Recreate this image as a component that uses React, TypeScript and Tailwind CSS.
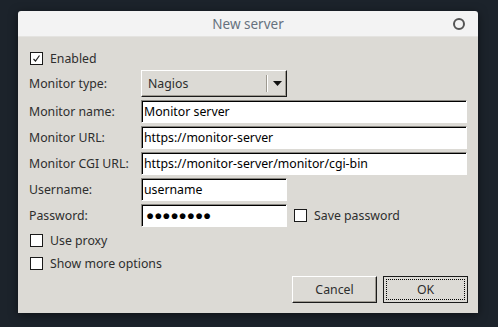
import React from "react";

function Check({ checked = false }: { checked?: boolean }) {
    return (
        <div className="w-[13px] h-[13px] border border-[#1a1a1a] bg-white flex items-center justify-center shrink-0">
            {checked && (
                <svg width="9" height="9" viewBox="0 0 9 9">
                    <path d="M1.5 5 L3.5 7 L7.5 1.5" stroke="#222" strokeWidth="1.2" fill="none" />
                </svg>
            )}
        </div>
    );
}

function Field({ value, width, password = false }: { value: string; width: string; password?: boolean }) {
    return (
        <div
            className={`${width} h-[23px] bg-white border border-t-[#8a8883] border-l-[#8a8883] border-b-white border-r-white shadow-[inset_1px_1px_0_#000] flex items-center pl-[2px] text-black`}
        >
            {password ? (
                <span className="pl-[2px] pt-[1px] text-[13.5px] leading-none">●●●●●●●●</span>
            ) : (
                <span className="pt-[2px]">{value}</span>
            )}
        </div>
    );
}

function Row({ label, children }: { label: string; children: React.ReactNode }) {
    return (
        <div className="flex items-center mt-[3px]">
            <div className="w-[112px] shrink-0 pt-[2px]">{label}</div>
            {children}
        </div>
    );
}

export default function App() {
    return (
        <div className="w-[498px] h-[327px] bg-[#1c232b] pt-[11px] pl-[18px]" style={{ fontFamily: '"Noto Sans", sans-serif' }}>
            <div className="w-[460px] h-[302px] flex flex-col shadow-[0_2px_10px_rgba(0,0,0,0.5)] rounded-t-[3px] overflow-hidden">
                <div className="h-[26px] bg-[#f3f3f3] flex items-center justify-center relative border-b border-[#e4e3e0]">
                    <span className="text-[13.5px] text-[#66717e] pt-[1px]">New server</span>
                    <div className="absolute right-[13px] top-[7px] w-[12px] h-[12px] rounded-full border-2 border-[#555]" />
                </div>
                <div className="flex-1 bg-[#dcdad5] pt-[11px] px-[11px] text-[12.3px] text-[#2e2e2e]">
                    <div className="h-[21px] flex items-center gap-[7px] pl-[1px]">
                        <Check checked />
                        <span className="pt-[2px]">Enabled</span>
                    </div>
                    <div className="flex items-center mt-[1px]">
                        <div className="w-[112px] shrink-0 pt-[2px]">Monitor type:</div>
                        <div className="w-[146px] h-[27px] border border-t-white border-l-white border-b-[#1a1a1a] border-r-[#1a1a1a] shadow-[inset_-1px_-1px_0_#9e9a91] flex items-center pl-[6px]">
                            <span className="flex-1 pt-[2px]">Nagios</span>
                            <div className="w-[2px] h-[17px] border-l border-l-[#9e9a91] border-r border-r-white" />
                            <div className="w-[18px] flex justify-center">
                                <svg width="9" height="5" viewBox="0 0 9 5">
                                    <path d="M0 0 H9 L4.5 5 Z" fill="#111" />
                                </svg>
                            </div>
                        </div>
                    </div>
                    <Row label="Monitor name:">
                        <Field value="Monitor server" width="w-[326px]" />
                    </Row>
                    <Row label="Monitor URL:">
                        <Field value="https://monitor-server" width="w-[326px]" />
                    </Row>
                    <Row label="Monitor CGI URL:">
                        <Field value="https://monitor-server/monitor/cgi-bin" width="w-[326px]" />
                    </Row>
                    <Row label="Username:">
                        <Field value="username" width="w-[146px]" />
                    </Row>
                    <Row label="Password:">
                        <Field value="" width="w-[146px]" password />
                        <div className="flex items-center gap-[7px] ml-[7px]">
                            <Check />
                            <span className="pt-[2px]">Save password</span>
                        </div>
                    </Row>
                    <div className="h-[21px] flex items-center gap-[7px] pl-[1px] mt-[3px]">
                        <Check />
                        <span className="pt-[2px]">Use proxy</span>
                    </div>
                    <div className="h-[21px] flex items-center gap-[7px] pl-[1px] mt-[2px]">
                        <Check />
                        <span className="pt-[2px]">Show more options</span>
                    </div>
                    <div className="flex justify-end gap-[6px] mt-[2px] -mr-[1px]">
                        <div className="w-[85px] h-[27px] border border-t-white border-l-white border-b-[#1a1a1a] border-r-[#1a1a1a] shadow-[inset_-1px_-1px_0_#9e9a91] flex items-center justify-center pt-[2px]">
                            Cancel
                        </div>
                        <div className="w-[85px] h-[27px] border border-[#1a1a1a] p-[2px]">
                            <div className="w-full h-full border border-dotted border-black flex items-center justify-center pt-[2px]">
                                OK
                            </div>
                        </div>
                    </div>
                </div>
            </div>
        </div>
    );
}
